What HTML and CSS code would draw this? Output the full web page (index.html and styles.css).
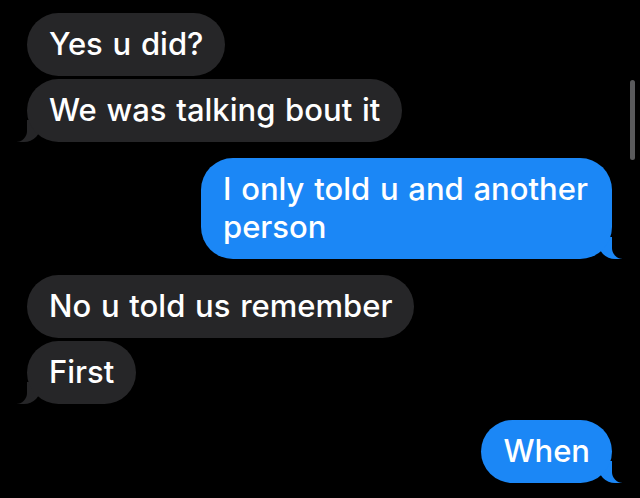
FILE: index.html
```html
<!DOCTYPE html>
<html>
<head>
<meta charset="utf-8">
<link rel="stylesheet" href="styles.css">
</head>
<body>
<div class="thread">
  <div class="msg in">Yes u did?</div>
  <div class="msg in tail">We was talking bout it</div>
  <div class="msg out tail gap">I only told u and another person</div>
  <div class="msg in gap">No u told us remember</div>
  <div class="msg in tail">First</div>
  <div class="msg out tail gap">When</div>
</div>
<div class="scrollbar"></div>
</body>
</html>
```

FILE: styles.css
```css
html, body {
  margin: 0;
  padding: 0;
  background: #000;
  height: 100%;
  overflow: hidden;
}
body {
  font-family: Inter, "Noto Sans", sans-serif;
  color: #fff;
}
.thread {
  position: relative;
  z-index: 0;
  display: flex;
  flex-direction: column;
  gap: 3px;
  padding: 13px 28px 0 27px;
}
.msg {
  position: relative;
  box-sizing: border-box;
  max-width: 411px;
  padding: 12px 22px 13px 22px;
  font-size: 31px;
  line-height: 38px;
  font-weight: 500;
  letter-spacing: 0;
  word-spacing: 1.5px;
  border-radius: 32px;
  width: fit-content;
}
.msg.gap {
  margin-top: 13px;
}
.in {
  align-self: flex-start;
  background: #262628;
}
.out {
  align-self: flex-end;
  background: #1b87f6;
}
.tail::before,
.tail::after {
  content: "";
  position: absolute;
  bottom: 0;
  height: 22px;
  z-index: -1;
}
.in.tail::before {
  left: -10px;
  width: 24px;
  background: #262628;
  border-bottom-right-radius: 17px;
}
.in.tail::after {
  left: -14px;
  width: 14px;
  background: #000;
  border-bottom-right-radius: 11px;
}
.out.tail::before {
  right: -10px;
  width: 24px;
  background: #1b87f6;
  border-bottom-left-radius: 17px;
}
.out.tail::after {
  right: -14px;
  width: 14px;
  background: #000;
  border-bottom-left-radius: 11px;
}
.scrollbar {
  position: absolute;
  left: 630px;
  top: 80px;
  width: 5px;
  height: 80px;
  border-radius: 3px;
  background: #5a5a5c;
}
```
